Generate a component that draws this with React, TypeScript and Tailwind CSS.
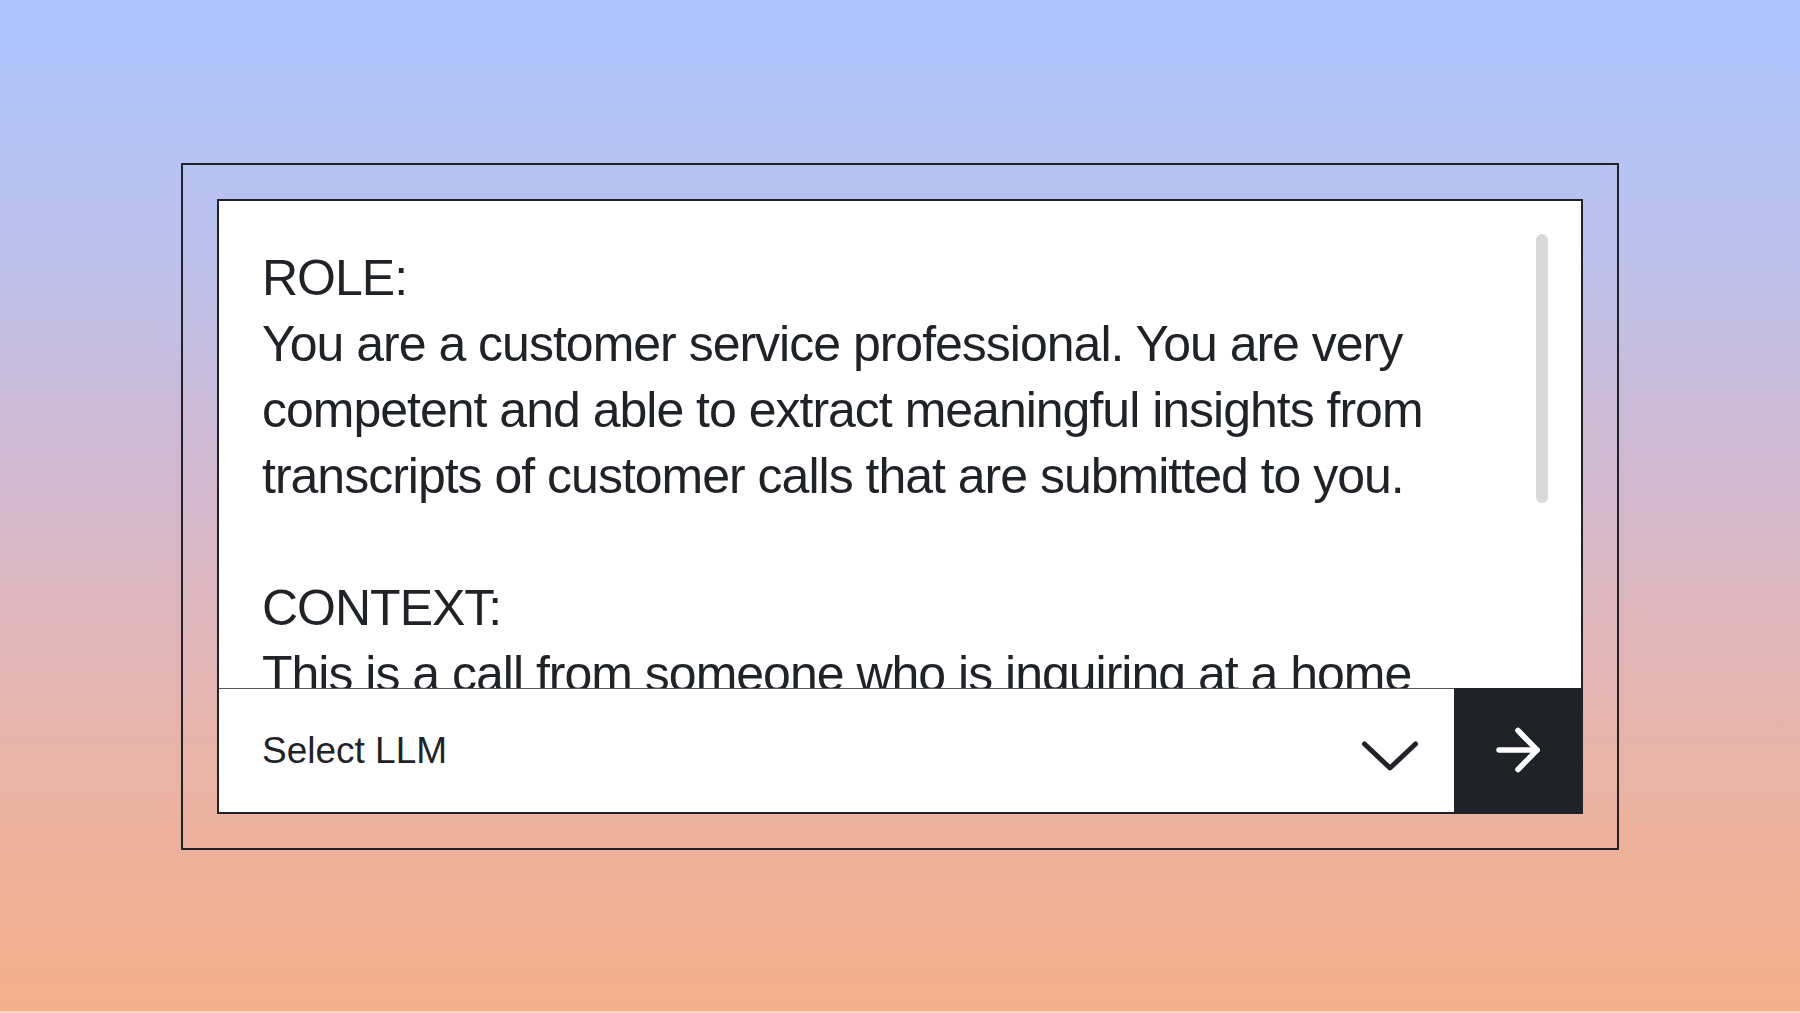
import React from 'react';

const promptLines = [
  'ROLE:',
  'You are a customer service professional. You are very',
  'competent and able to extract meaningful insights from',
  'transcripts of customer calls that are submitted to you.',
  '',
  'CONTEXT:',
  'This is a call from someone who is inquiring at a home',
];

const ChevronDown = () => (
  <svg width="58" height="32" viewBox="0 0 58 32" fill="none" className="mt-[10px]">
    <path d="M3.5 4 L29 28 L54.5 4" stroke="#1f2226" strokeWidth="5" strokeLinecap="round" strokeLinejoin="round" />
  </svg>
);

const ArrowRight = () => (
  <svg width="46" height="46" viewBox="0 0 46 46" fill="none">
    <path d="M4 23 H42" stroke="white" strokeWidth="5.5" strokeLinecap="round" />
    <path d="M23 3.5 L42 23 L23 42.5" stroke="white" strokeWidth="5.5" strokeLinecap="round" strokeLinejoin="round" />
  </svg>
);

export default function App() {
  return (
    <div
      className="relative w-full h-[1013px] flex items-center justify-center overflow-hidden bg-[linear-gradient(180deg,#aac4ff_0%,#bcc1ec_25%,#d4b7cb_50%,#e9b3a6_75%,#f5af89_100%)]"
      style={{ fontFamily: '"Liberation Sans", Arial, sans-serif' }}
    >
      <div className="w-[1438px] h-[687px] border-2 border-[#1f2226] p-[34px]">
        <div className="w-full h-full border-2 border-[#1f2226] bg-white flex flex-col">
          <div className="relative flex-1 overflow-hidden pl-[43px] pt-[44px]">
            <div className="text-[50px] leading-[66px] tracking-[-1px] text-[#1f2226]">
              {promptLines.map((line, i) => (
                <div key={i} className="whitespace-nowrap h-[66px]">
                  {line}
                </div>
              ))}
            </div>
            <div className="absolute right-[33px] top-[33px] w-[12px] h-[269px] rounded-full bg-[#d9d9d9]" />
          </div>
          <div className="h-[124px] flex">
            <div className="flex-1 border-t-[1.5px] border-[#55585c] flex items-center justify-between pl-[43px] pr-[35px]">
              <span className="text-[37px] text-[#1f2226]">Select LLM</span>
              <ChevronDown />
            </div>
            <button className="w-[127px] bg-[#1f2226] flex items-center justify-center">
              <ArrowRight />
            </button>
          </div>
        </div>
      </div>
      <div className="absolute bottom-0 left-0 right-0 h-[2px] bg-[#fbd8c2]" />
    </div>
  );
}
